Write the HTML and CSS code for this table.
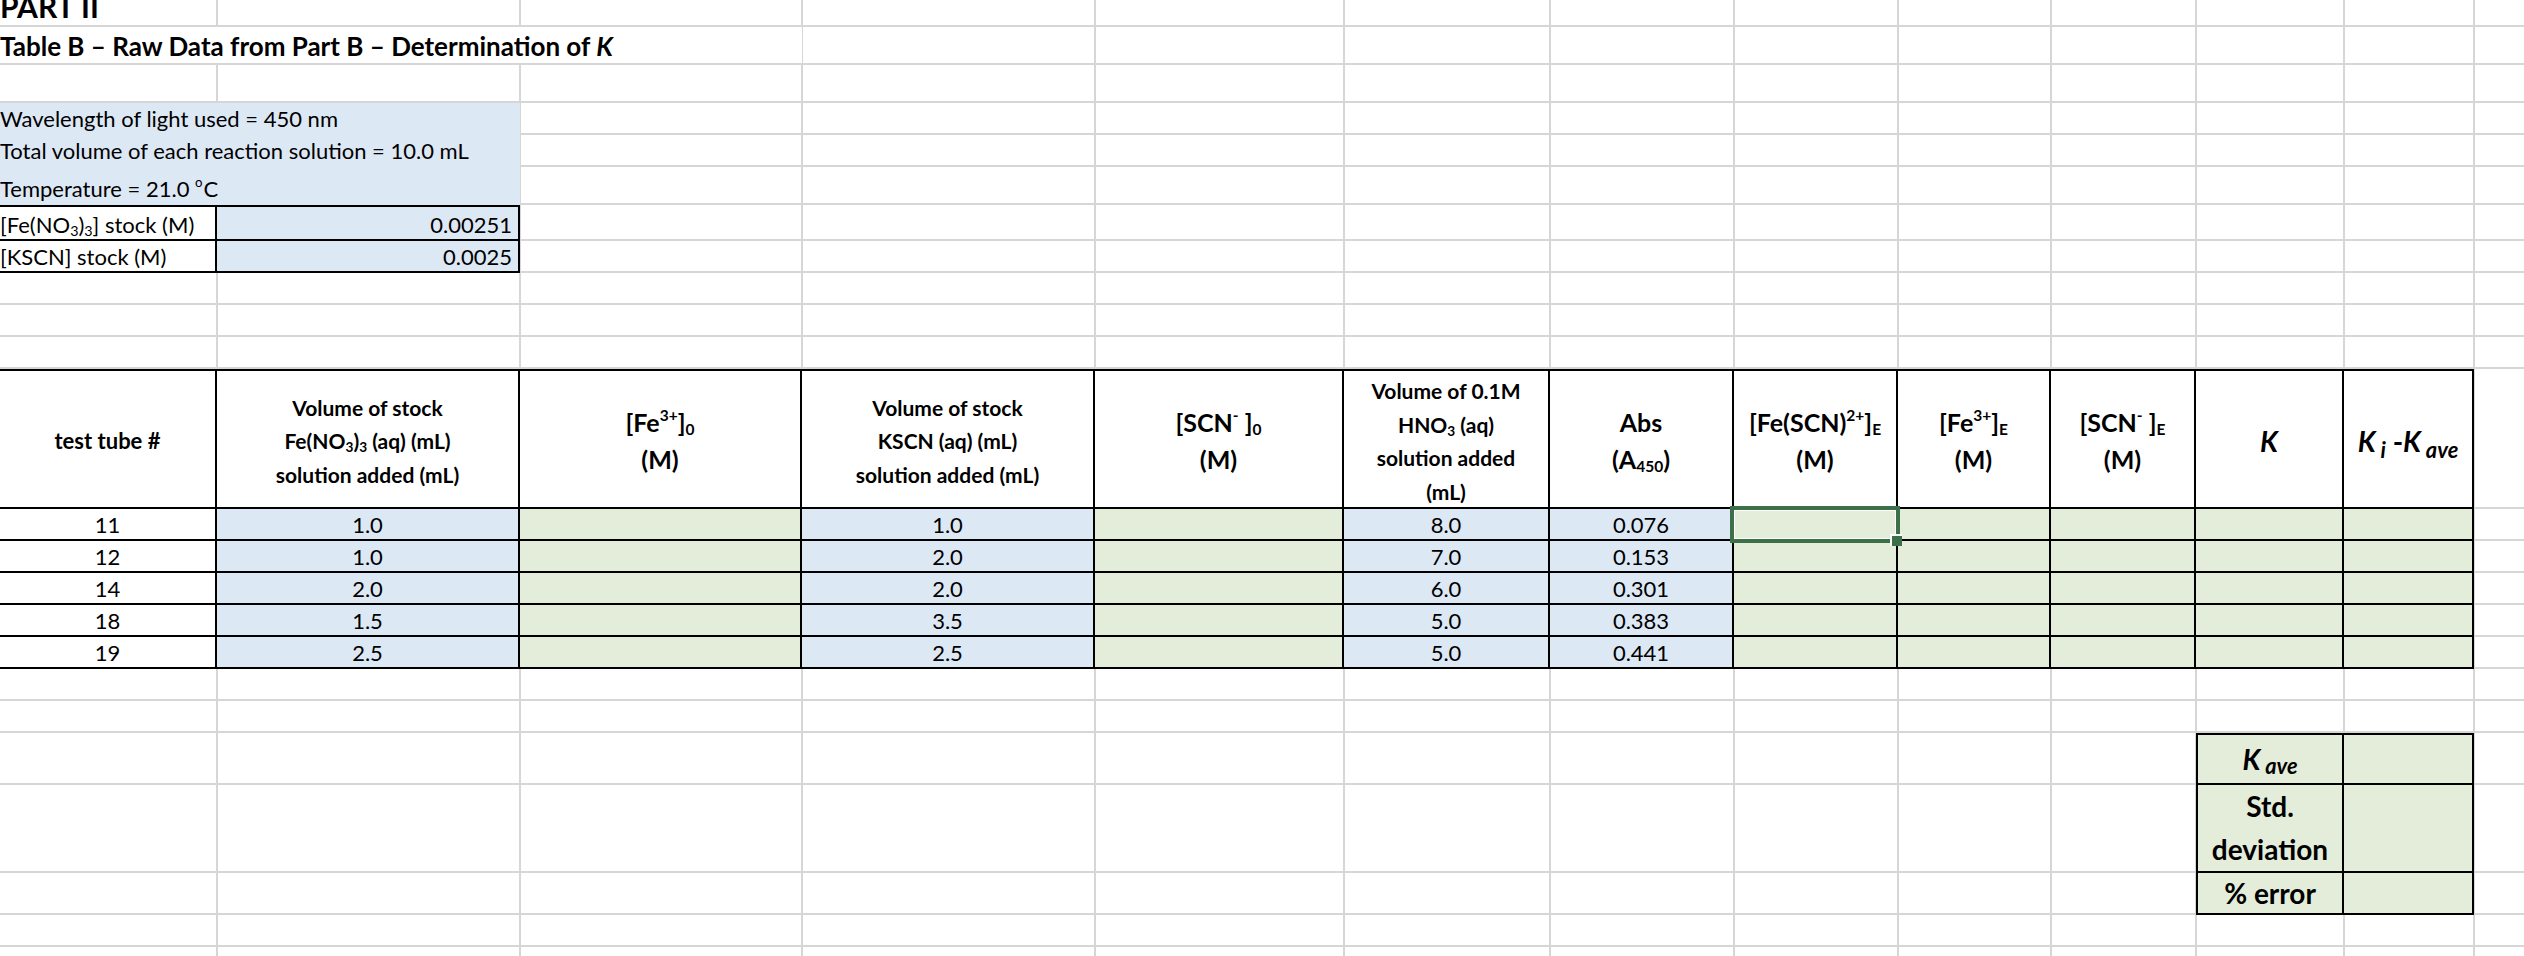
FILE: index.html
```html
<!DOCTYPE html>
<html lang="en">
<head>
<meta charset="utf-8">
<title>Table B – Raw Data</title>
<link rel="stylesheet" href="styles.css">
</head>
<body>
<div class="sheet">
  <div class="row h27"><div class="cell part"><span>PART II</span></div></div>
  <div class="row h38"><div class="cell title"><span>Table B – Raw Data from Part B – Determination of <i>K</i></span></div></div>
  <div class="row h38"></div>
  <div class="row h32"><div class="cell info"><span>Wavelength of light used = 450 nm</span></div></div>
  <div class="row h32"><div class="cell info"><span>Total volume of each reaction solution = 10.0 mL</span></div></div>
  <div class="row h38"><div class="cell info"><span>Temperature = 21.0 <sup class="deg">o</sup>C</span></div></div>
  <div class="row h36">
    <div class="cell lab bt"><span>[Fe(NO<sub class="s1">3</sub>)<sub class="s1">3</sub>] stock (M)</span></div>
    <div class="cell val bt"><span>0.00251</span></div>
  </div>
  <div class="row h32">
    <div class="cell lab"><span>[KSCN] stock (M)</span></div>
    <div class="cell val"><span>0.0025</span></div>
  </div>
  <div class="row h32"></div>
  <div class="row h32"></div>
  <div class="row h32"></div>

  <div class="row h140">
    <div class="cell hd hs"><div>test tube #</div></div>
    <div class="cell hd hv"><div>Volume of stock<br>Fe(NO<sub class="s2">3</sub>)<sub class="s2">3</sub> (aq) (mL)<br>solution added (mL)</div></div>
    <div class="cell hd hb"><div>[Fe<sup class="p">3+</sup>]<sub class="s3">0</sub><br>(M)</div></div>
    <div class="cell hd hv"><div>Volume of stock<br>KSCN (aq) (mL)<br>solution added (mL)</div></div>
    <div class="cell hd hb"><div>[SCN<sup class="p">-</sup> ]<sub class="s3">0</sub><br>(M)</div></div>
    <div class="cell hd hv"><div>Volume of 0.1M<br>HNO<sub class="s2">3</sub> (aq)<br>solution added<br>(mL)</div></div>
    <div class="cell hd hb"><div>Abs<br>(A<sub class="s3">450</sub>)</div></div>
    <div class="cell hd hb"><div>[Fe(SCN)<sup class="p">2+</sup>]<sub class="s3">E</sub><br>(M)</div></div>
    <div class="cell hd hb"><div>[Fe<sup class="p">3+</sup>]<sub class="s3">E</sub><br>(M)</div></div>
    <div class="cell hd hb"><div>[SCN<sup class="p">-</sup> ]<sub class="s3">E</sub><br>(M)</div></div>
    <div class="cell hd hk"><div><i>K</i></div></div>
    <div class="cell hd hk"><div><i>K</i><sub class="sk"><i> i</i></sub> -<i>K</i><sub class="sk"><i> ave</i></sub></div></div>
  </div>

  <div class="row h32">
    <div class="cell d"><span>11</span></div><div class="cell d blue"><span>1.0</span></div><div class="cell d green"></div>
    <div class="cell d blue"><span>1.0</span></div><div class="cell d green"></div><div class="cell d blue"><span>8.0</span></div>
    <div class="cell d blue"><span>0.076</span></div>
    <div class="cell d green selcell"><div class="sel"><div class="handle"></div></div></div>
    <div class="cell d green"></div><div class="cell d green"></div><div class="cell d green"></div><div class="cell d green"></div>
  </div>
  <div class="row h32">
    <div class="cell d"><span>12</span></div><div class="cell d blue"><span>1.0</span></div><div class="cell d green"></div>
    <div class="cell d blue"><span>2.0</span></div><div class="cell d green"></div><div class="cell d blue"><span>7.0</span></div>
    <div class="cell d blue"><span>0.153</span></div>
    <div class="cell d green"></div><div class="cell d green"></div><div class="cell d green"></div><div class="cell d green"></div><div class="cell d green"></div>
  </div>
  <div class="row h32">
    <div class="cell d"><span>14</span></div><div class="cell d blue"><span>2.0</span></div><div class="cell d green"></div>
    <div class="cell d blue"><span>2.0</span></div><div class="cell d green"></div><div class="cell d blue"><span>6.0</span></div>
    <div class="cell d blue"><span>0.301</span></div>
    <div class="cell d green"></div><div class="cell d green"></div><div class="cell d green"></div><div class="cell d green"></div><div class="cell d green"></div>
  </div>
  <div class="row h32">
    <div class="cell d"><span>18</span></div><div class="cell d blue"><span>1.5</span></div><div class="cell d green"></div>
    <div class="cell d blue"><span>3.5</span></div><div class="cell d green"></div><div class="cell d blue"><span>5.0</span></div>
    <div class="cell d blue"><span>0.383</span></div>
    <div class="cell d green"></div><div class="cell d green"></div><div class="cell d green"></div><div class="cell d green"></div><div class="cell d green"></div>
  </div>
  <div class="row h32">
    <div class="cell d"><span>19</span></div><div class="cell d blue"><span>2.5</span></div><div class="cell d green"></div>
    <div class="cell d blue"><span>2.5</span></div><div class="cell d green"></div><div class="cell d blue"><span>5.0</span></div>
    <div class="cell d blue"><span>0.441</span></div>
    <div class="cell d green"></div><div class="cell d green"></div><div class="cell d green"></div><div class="cell d green"></div><div class="cell d green"></div>
  </div>

  <div class="row h32"></div>
  <div class="row h32"></div>

  <div class="row h52">
    <div class="cell bx bxl bt lbl colK"><div><i>K</i><sub class="sk2"><i> ave</i></sub></div></div>
    <div class="cell bx bt"></div>
  </div>
  <div class="row h88">
    <div class="cell bx bxl lbl lbl2 colK"><div>Std.<br>deviation</div></div>
    <div class="cell bx"></div>
  </div>
  <div class="row h42">
    <div class="cell bx bxl lbl colK"><div>% error</div></div>
    <div class="cell bx"></div>
  </div>
  <div class="row h32"></div>
  <div class="row h32"></div>
</div>
</body>
</html>
```

FILE: styles.css
```css
:root {
  --g: #d6d6d6;
  --blue: #dde8f5;
  --green: #e3edda;
  --sel: #3b7049;
}

html, body {
  margin: 0;
  padding: 0;
  background: #fff;
  overflow: hidden;
}

body {
  font-family: Lato, "Liberation Sans", sans-serif;
  color: #000;
}

.sheet {
  width: 2524px;
  height: 956px;
  overflow: hidden;
  display: flex;
  flex-direction: column;
}

.row {
  flex: none;
  display: grid;
  grid-template-columns: 217px 303px 282px 293px 249px 206px 184px 164px 153px 145px 148px 130px 1fr;
  grid-template-rows: minmax(0, 1fr);
  background:
    linear-gradient(var(--g), var(--g)) 0 100% / 100% 2px no-repeat,
    linear-gradient(var(--g), var(--g)) 216px 0 / 2px 100% no-repeat,
    linear-gradient(var(--g), var(--g)) 519px 0 / 2px 100% no-repeat,
    linear-gradient(var(--g), var(--g)) 801px 0 / 2px 100% no-repeat,
    linear-gradient(var(--g), var(--g)) 1094px 0 / 2px 100% no-repeat,
    linear-gradient(var(--g), var(--g)) 1343px 0 / 2px 100% no-repeat,
    linear-gradient(var(--g), var(--g)) 1549px 0 / 2px 100% no-repeat,
    linear-gradient(var(--g), var(--g)) 1733px 0 / 2px 100% no-repeat,
    linear-gradient(var(--g), var(--g)) 1897px 0 / 2px 100% no-repeat,
    linear-gradient(var(--g), var(--g)) 2050px 0 / 2px 100% no-repeat,
    linear-gradient(var(--g), var(--g)) 2195px 0 / 2px 100% no-repeat,
    linear-gradient(var(--g), var(--g)) 2343px 0 / 2px 100% no-repeat,
    linear-gradient(var(--g), var(--g)) 2473px 0 / 2px 100% no-repeat;
}

.h27 { height: 27px; }
.h32 { height: 32px; }
.h36 { height: 36px; }
.h38 { height: 38px; }
.h42 { height: 42px; }
.h52 { height: 52px; }
.h88 { height: 88px; }
.h140 { height: 140px; }

.cell {
  box-sizing: border-box;
  min-width: 0;
  min-height: 0;
  display: flex;
  align-items: flex-end;
  padding: 0 2px 3px 2px;
  font-size: 22px;
  line-height: 26px;
  white-space: nowrap;
}

/* headings above the tables */
.part {
  font-weight: 700;
  font-size: 30px;
  line-height: 30px;
  padding: 0 0 6px 0;
}

.title {
  grid-column: 1 / 4;
  background: #fff;
  border-bottom: 2px solid var(--g);
  font-weight: 700;
  font-size: 26px;
  line-height: 31px;
  padding: 0 0 1px 0;
}

.info {
  grid-column: 1 / 3;
  background: var(--blue);
  padding-left: 0;
}

.deg {
  font-size: 0.6em;
  vertical-align: 0.75em;
  line-height: 0;
  margin-right: 1px;
}

.s1, .s2 {
  font-size: 0.65em;
  vertical-align: -0.2em;
  line-height: 0;
}

.lab {
  background: #fff;
  border-right: 2px solid #000;
  border-bottom: 2px solid #000;
  padding: 0 0 1px 0;
}

.val {
  background: var(--blue);
  justify-content: flex-end;
  border-right: 2px solid #000;
  border-bottom: 2px solid #000;
  padding: 0 6px 1px 0;
}

.bt { border-top: 2px solid #000; }

/* main table header */
.hd {
  background: #fff;
  border-top: 2px solid #000;
  border-right: 2px solid #000;
  border-bottom: 2px solid #000;
  align-items: center;
  justify-content: center;
  text-align: center;
  font-weight: 700;
  padding: 4px 0 0 0;
}

.hs { font-size: 22px; line-height: 34px; }
.hv { font-size: 21px; line-height: 33.5px; }
.hb { font-size: 25px; line-height: 37px; }
.hk { font-size: 28px; line-height: 36px; }

.p {
  font-size: 0.62em;
  vertical-align: 0.7em;
  line-height: 0;
}

.s3 {
  font-size: 0.62em;
  vertical-align: -0.18em;
  line-height: 0;
}

.sk {
  font-size: 0.78em;
  vertical-align: -0.26em;
  line-height: 0;
}

/* data rows */
.d {
  background: #fff;
  justify-content: center;
  border-right: 2px solid #000;
  border-bottom: 2px solid #000;
  padding: 0 0 1px 0;
}

.blue { background: var(--blue); }
.green { background: var(--green); }

.selcell { position: relative; }

.sel {
  position: absolute;
  left: -4px;
  right: -4px;
  top: -3px;
  bottom: -4px;
  border: 4px solid var(--sel);
  box-shadow: inset 0 0 0 1px #fff;
}

.handle {
  position: absolute;
  right: -6px;
  bottom: -7px;
  width: 10px;
  height: 10px;
  background: var(--sel);
  border-left: 2px solid #fff;
  border-top: 2px solid #fff;
}

/* summary box */
.colK { grid-column: 11; }

.bx {
  background: var(--green);
  border-right: 2px solid #000;
  border-bottom: 2px solid #000;
}

.bxl { border-left: 2px solid #000; }

.lbl {
  align-items: center;
  justify-content: center;
  text-align: center;
  font-weight: 700;
  font-size: 28px;
  line-height: 34px;
  padding: 0;
}

.lbl2 { line-height: 43px; }

.sk2 {
  font-size: 0.78em;
  vertical-align: -0.2em;
  line-height: 0;
}
```
